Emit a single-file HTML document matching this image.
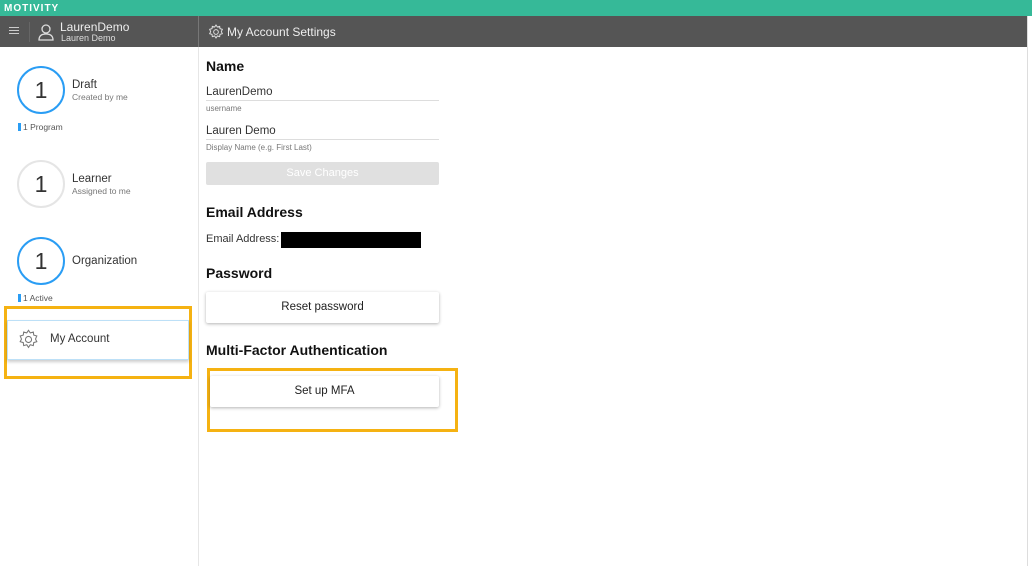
<!DOCTYPE html><html><head><style>
body{margin:0;width:1032px;height:566px;overflow:hidden;font-family:"Liberation Sans",sans-serif;background:#fff;position:relative}
.a{position:absolute}
.circ{position:absolute;width:44px;height:44px;border-radius:50%;border:2.5px solid #2a9df4;text-align:center;line-height:44px;font-size:23px;color:#333}
.t{font-size:11.5px;color:#333}.s{font-size:8.5px;color:#777}
.h{font-size:14px;font-weight:bold;color:#111}
.btn{position:absolute;background:#fff;box-shadow:0 1px 3px rgba(0,0,0,.3);text-align:center;font-size:11.5px;color:#222;border-radius:2px}
</style></head><body>
<div class="a" style="left:0;top:0;width:1032px;height:16px;background:#36b998"></div>
<div class="a" style="left:4px;top:3px;font-size:10px;font-weight:bold;color:#fff;letter-spacing:1px">MOTIVITY</div>
<div class="a" style="left:0;top:16px;width:1028px;height:31px;background:#555"></div>
<div class="a" style="left:198px;top:16px;width:1px;height:31px;background:#777"></div>
<div class="a" style="left:9px;top:27px;width:10px;height:1px;background:#ccc;box-shadow:0 3px 0 #ccc,0 6px 0 #ccc"></div>
<div class="a" style="left:29px;top:22px;width:1px;height:20px;background:#666"></div>
<svg class="a" style="left:38px;top:23px" width="16" height="18" viewBox="0 0 16 18"><circle cx="8" cy="6" r="4" fill="none" stroke="#ddd" stroke-width="1.3"/><path d="M1 17 Q1 11 8 11 Q15 11 15 17 Z" fill="none" stroke="#ddd" stroke-width="1.3"/></svg>
<div class="a" style="left:60px;top:20px;font-size:12px;color:#eee">LaurenDemo</div>
<div class="a" style="left:61px;top:33px;font-size:9px;color:#ddd">Lauren Demo</div>
<svg class="a" style="left:208px;top:24px" width="16" height="16" viewBox="0 0 24 24"><circle cx="12" cy="12" r="3.5" fill="none" stroke="#ddd" stroke-width="1.5"/><path d="M12 1.5l2 3 3.5-1 .5 3.5 3.5 1-1.5 3.5 1.5 3-3.5 1-.5 3.5-3.5-1-2 3-2-3-3.5 1-.5-3.5-3.5-1 1.5-3-1.5-3.5 3.5-1 .5-3.5 3.5 1z" fill="none" stroke="#ddd" stroke-width="1.5"/></svg>
<div class="a" style="left:227px;top:25px;font-size:12px;color:#eee">My Account Settings</div>
<div class="a" style="left:198px;top:47px;width:1px;height:519px;background:#e6e6e6"></div>
<div class="a" style="left:1027px;top:16px;width:1px;height:550px;background:#ddd"></div>

<div class="circ" style="left:17px;top:66px">1</div>
<div class="a t" style="left:72px;top:79px">Draft</div><div class="a s" style="left:72px;top:92px">Created by me</div>
<div class="a" style="left:18px;top:123px;width:3px;height:8px;background:#2a9df4"></div><div class="a s" style="left:23px;top:122px;color:#555">1 Program</div>
<div class="circ" style="left:17px;top:160px;border-color:#e5e5e5">1</div>
<div class="a t" style="left:72px;top:173px">Learner</div><div class="a s" style="left:72px;top:186px">Assigned to me</div>
<div class="circ" style="left:17px;top:237px">1</div>
<div class="a t" style="left:72px;top:255px">Organization</div>
<div class="a" style="left:18px;top:294px;width:3px;height:8px;background:#2a9df4"></div><div class="a s" style="left:23px;top:293px;color:#555">1 Active</div>
<div class="a" style="left:4px;top:306px;width:182px;height:67px;border:3px solid #f5b212"></div>
<div class="a" style="left:7px;top:320px;width:180px;height:38px;background:#fff;border:1px solid #bde0f7;box-shadow:0 2px 3px rgba(0,0,0,.2)"></div>
<svg class="a" style="left:18px;top:329px" width="21" height="21" viewBox="0 0 24 24"><circle cx="12" cy="12" r="3.5" fill="none" stroke="#777" stroke-width="1.2"/><path d="M12 1.5l2 3 3.5-1 .5 3.5 3.5 1-1.5 3.5 1.5 3-3.5 1-.5 3.5-3.5-1-2 3-2-3-3.5 1-.5-3.5-3.5-1 1.5-3-1.5-3.5 3.5-1 .5-3.5 3.5 1z" fill="none" stroke="#777" stroke-width="1.2"/></svg>
<div class="a t" style="left:50px;top:333px">My Account</div>

<div class="a h" style="left:206px;top:58px">Name</div>
<div class="a t" style="left:206px;top:86px">LaurenDemo</div>
<div class="a" style="left:206px;top:100px;width:233px;height:1px;background:#ddd"></div>
<div class="a s" style="left:206px;top:104px;font-size:8px">username</div>
<div class="a t" style="left:206px;top:125px">Lauren Demo</div>
<div class="a" style="left:206px;top:139px;width:233px;height:1px;background:#ddd"></div>
<div class="a s" style="left:206px;top:143px;font-size:8px">Display Name (e.g. First Last)</div>
<div class="a" style="left:206px;top:162px;width:233px;height:23px;background:#e0e0e0;color:#fff;font-size:11px;text-align:center;line-height:23px;border-radius:2px">Save Changes</div>
<div class="a h" style="left:206px;top:204px">Email Address</div>
<div class="a t" style="left:206px;top:233px;font-size:11px">Email Address:</div>
<div class="a" style="left:281px;top:232px;width:140px;height:16px;background:#000"></div>
<div class="a h" style="left:206px;top:265px">Password</div>
<div class="btn" style="left:206px;top:292px;width:233px;height:31px;line-height:31px">Reset password</div>
<div class="a h" style="left:206px;top:342px">Multi-Factor Authentication</div>
<div class="a" style="left:207px;top:368px;width:245px;height:58px;border:3px solid #f5b212"></div>
<div class="btn" style="left:210px;top:376px;width:229px;height:31px;line-height:31px">Set up MFA</div>
</body></html>
